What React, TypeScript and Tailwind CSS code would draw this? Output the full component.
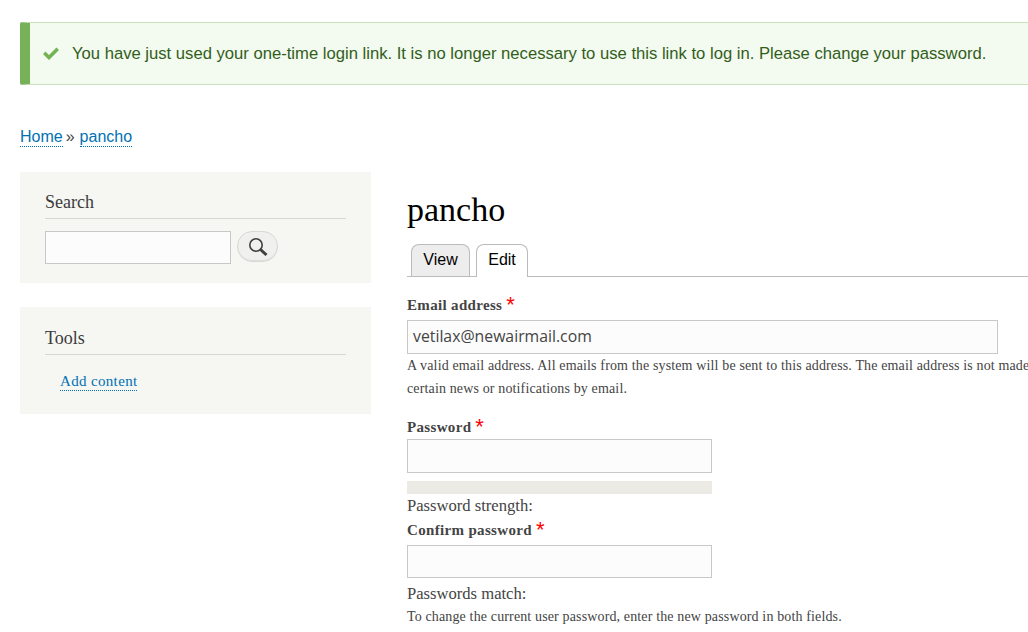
const serif = { fontFamily: '"Liberation Serif", serif' };

function Req() {
  return <span className="text-[22px] font-normal leading-none text-[#ff0000]" style={{ fontFamily: '"Liberation Sans", sans-serif' }}>*</span>;
}

function Field({ className }: { className: string }) {
  return <div className={`border border-[#c8c8c8] bg-[#fcfcfc] ${className}`} />;
}

function Block({ title, children, className }: { title: string; children: React.ReactNode; className: string }) {
  return (
    <div className={`bg-[#f6f6f2] px-[25px] ${className}`}>
      <h2 className="border-b border-[#d6d6d2] pb-[4px] text-[18px] leading-[24px] text-[#3b3b3b]">{title}</h2>
      {children}
    </div>
  );
}

function SearchIcon() {
  return (
    <svg width="20" height="20" viewBox="0 0 20 20" fill="none" stroke="#404040">
      <circle cx="8" cy="8" r="6.2" strokeWidth="1.6" />
      <path d="M12.5 12.5 L18.5 18" strokeWidth="3" />
    </svg>
  );
}

export default function App() {
  return (
    <div className="h-[632px] w-[1028px] overflow-hidden bg-white text-[#444444]" style={serif}>
      <div className="pl-5 pt-[22px]">
        <div
          className="flex h-[63px] w-[1100px] items-center rounded-l-[2px] border border-l-[10px] border-[#c9e1bd] border-l-[#77b259] bg-[#f3faef] pl-[12px] text-[16.64px] text-[#325e1c]"
          style={{ fontFamily: '"Liberation Sans", sans-serif' }}
        >
          <svg width="18" height="15" viewBox="0 0 18 15" className="mr-[12px]">
            <path d="M1 8 L3.5 5.5 L7 9 L14.5 1.5 L17 4 L7 14 Z" fill="#73b355" />
          </svg>
          <span className="mt-[2px]">You have just used your one-time login link. It is no longer necessary to use this link to log in. Please change your password.</span>
        </div>

        <div className="mt-[42px] flex h-[20px] items-center text-[16px] text-[#444444]" style={{ fontFamily: '"Liberation Sans", sans-serif' }}>
          <span className="border-b border-dotted border-[#0071b3] leading-[18px] text-[#0071b3]">Home</span>
          <span className="ml-[3px] mr-[5px]">»</span>
          <span className="border-b border-dotted border-[#0071b3] leading-[18px] text-[#0071b3]">pancho</span>
        </div>

        <div className="mt-[25px] flex gap-[36px]">
          <aside className="flex w-[351px] shrink-0 flex-col gap-[24px]">
            <Block title="Search" className="h-[111px] pt-[18px]">
              <div className="mt-[12px] flex gap-[6px]">
                <Field className="h-[33px] w-[186px]" />
                <div className="flex h-[31px] w-[41px] items-center justify-center rounded-[15px] border border-[#d8d8d4] bg-[#f0f0ee] shadow-[inset_0_-1px_1px_#dddddd]">
                  <SearchIcon />
                </div>
              </div>
            </Block>
            <Block title="Tools" className="h-[107px] pt-[19px]">
              <div className="mt-[14px] pl-[15px]">
                <span className="inline-block border-b border-dotted border-[#0071b3] text-[15px] leading-[17px] tracking-[0.34px] text-[#0071b3]">Add content</span>
              </div>
            </Block>
          </aside>

          <main className="w-[700px] shrink-0">
            <h1 className="mt-[17px] text-[34px] leading-[42px] text-black">pancho</h1>
            <div className="mt-[13px] flex h-[33px] gap-[6px] border-b border-[#bbbbbb] pl-[4px] text-[16px] text-black" style={{ fontFamily: '"Liberation Sans", sans-serif' }}>
              <div className="flex h-[32px] w-[59px] items-center justify-center rounded-t-[8px] border border-b-0 border-[#bbbbbb] bg-[#ededed] pb-[2px]">View</div>
              <div className="flex h-[33px] w-[52px] items-center justify-center rounded-t-[8px] border border-b-0 border-[#bbbbbb] bg-white pb-[2px]">Edit</div>
            </div>

            <div className="mt-[18px] flex h-[20px] items-center gap-[4px] text-[15px] font-bold tracking-[0.33px]">Email address <Req /></div>
            <div className="mt-[5px] flex h-[34px] w-[591px] items-center border border-[#c8c8c8] bg-[#fcfcfc] pl-[5px] text-[15.8px] text-[#444444]" style={{ fontFamily: '"Open Sans", sans-serif' }}>vetilax@newairmail.com</div>
            <p className="w-[800px] text-[14px] leading-[23px] tracking-[0.14px]">
              <span className="block whitespace-nowrap">A valid email address. All emails from the system will be sent to this address. The email address is not made public and will only be used if you wish to receive a new password or wish to receive</span>
              <span className="block">certain news or notifications by email.</span>
            </p>

            <div className="mt-[17px] flex h-[20px] items-center gap-[4px] text-[15px] font-bold tracking-[0.33px]">Password <Req /></div>
            <Field className="mt-[2px] h-[34px] w-[305px]" />
            <div className="mt-[8px] h-[13px] w-[305px] bg-[#ebeae4]" />
            <div className="mt-[2px] text-[16.6px] leading-[20px]">Password strength:</div>
            <div className="mt-[4px] flex h-[20px] items-center gap-[4px] text-[15px] font-bold tracking-[0.33px]">Confirm password <Req /></div>
            <Field className="mt-[5px] h-[33px] w-[305px]" />
            <div className="mt-[6px] text-[16.6px] leading-[20px]">Passwords match:</div>
            <p className="mt-[2px] text-[14px] leading-[22px] tracking-[0.14px]">To change the current user password, enter the new password in both fields.</p>
          </main>
        </div>
      </div>
    </div>
  );
}
